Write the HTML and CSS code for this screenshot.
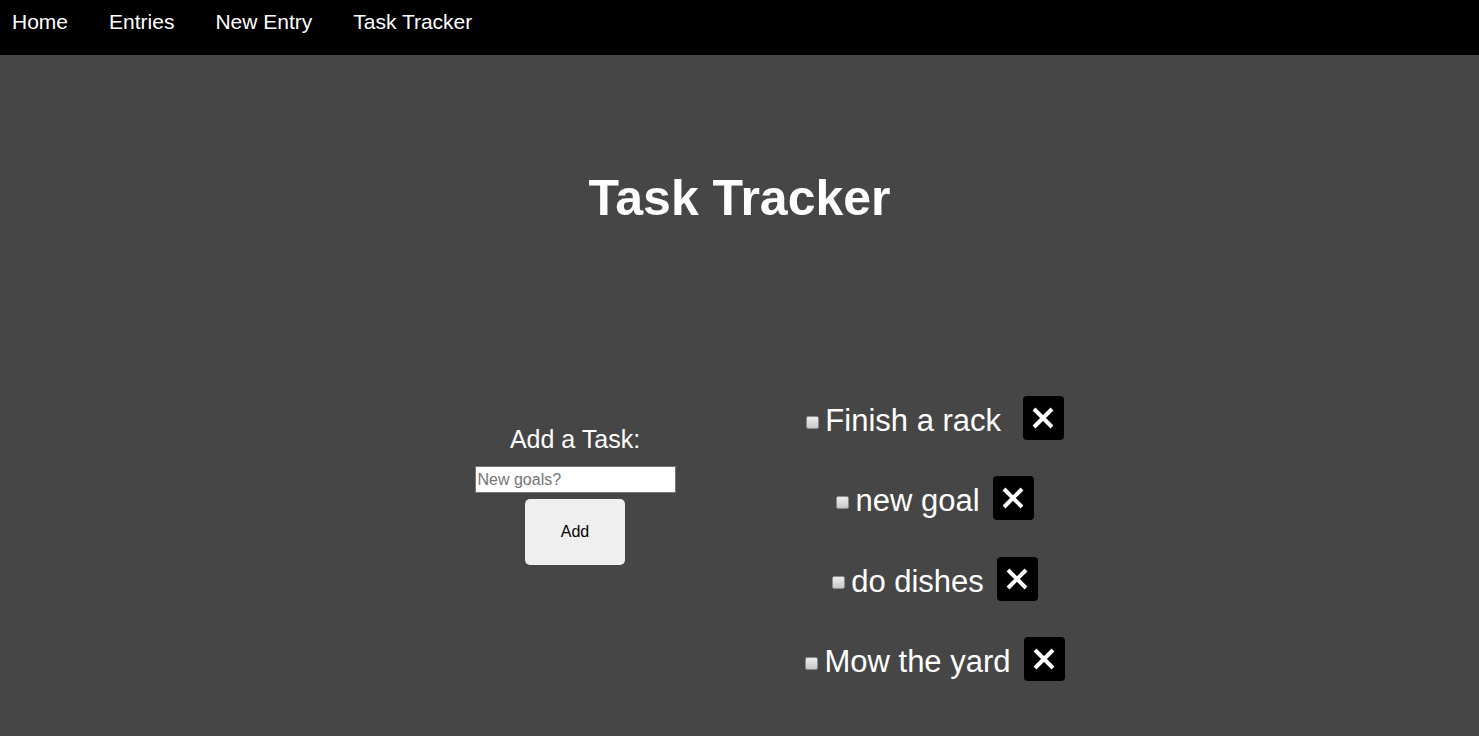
FILE: index.html
```html
<!DOCTYPE html>
<html lang="en">
<head>
  <meta charset="UTF-8">
  <meta name="viewport" content="width=device-width, initial-scale=1.0">
  <title>Task Tracker</title>
  <link rel="stylesheet" href="styles.css">
</head>
<body>

  <nav class="navbar">
    <a href="#">Home</a>
    <a href="#">Entries</a>
    <a href="#">New Entry</a>
    <a href="#">Task Tracker</a>
  </nav>

  <h1>Task Tracker</h1>

  <div class="tracker">
    <div class="add-col">
      <label for="new-task">Add a Task:</label>
      <input type="text" id="new-task" placeholder="New goals?" />
      <button class="add-btn">Add</button>
    </div>

    <div class="task-col">
      <div class="task">
        <input type="checkbox" class="check" />
        <span class="task-text">Finish a rack&nbsp;</span>
        <button class="delete-btn"><svg width="22" height="22" viewBox="0 0 22 22"><path d="M2 2 L20 20 M20 2 L2 20" stroke="#fff" stroke-width="4" /></svg></button>
      </div>
      <div class="task">
        <input type="checkbox" class="check" />
        <span class="task-text">new goal</span>
        <button class="delete-btn"><svg width="22" height="22" viewBox="0 0 22 22"><path d="M2 2 L20 20 M20 2 L2 20" stroke="#fff" stroke-width="4" /></svg></button>
      </div>
      <div class="task">
        <input type="checkbox" class="check" />
        <span class="task-text">do dishes</span>
        <button class="delete-btn"><svg width="22" height="22" viewBox="0 0 22 22"><path d="M2 2 L20 20 M20 2 L2 20" stroke="#fff" stroke-width="4" /></svg></button>
      </div>
      <div class="task">
        <input type="checkbox" class="check" />
        <span class="task-text">Mow the yard</span>
        <button class="delete-btn"><svg width="22" height="22" viewBox="0 0 22 22"><path d="M2 2 L20 20 M20 2 L2 20" stroke="#fff" stroke-width="4" /></svg></button>
      </div>
    </div>
  </div>

</body>
</html>
```

FILE: styles.css
```css
body {
  font-family: "Liberation Sans", Arial, sans-serif;
  background-color: #464646;
  color: white;
  margin: 0;
}
.navbar {
  background-color: black;
  height: 55px;
  display: flex;
  gap: 41px;
  padding: 10px 12px 0;
  box-sizing: border-box;
}
.navbar a {
  color: white;
  text-decoration: none;
  font-size: 21px;
  line-height: 24px;
}
h1 {
  font-size: 50px;
  text-align: center;
  margin: 116px 0 0;
  line-height: 55px;
}
.tracker {
  display: flex;
  justify-content: center;
  padding-left: 31px;
  margin-top: 170px;
}
.add-col {
  width: 360px;
  display: flex;
  flex-direction: column;
  align-items: center;
  padding-top: 32px;
}
.add-col label {
  font-size: 25px;
  line-height: 28px;
  margin: -3px 0 13px;
}
.add-col input {
  width: 201px;
  height: 27px;
  box-sizing: border-box;
  font-family: "Liberation Sans", Arial, sans-serif;
  font-size: 16px;
  padding: 1px 2px;
  border: 1px solid #767676;
  margin: 0;
}
.add-btn {
  width: 100px;
  height: 66px;
  margin-top: 6px;
  background-color: #efefef;
  border: none;
  border-radius: 5px;
  font-family: "Liberation Sans", Arial, sans-serif;
  font-size: 16px;
  color: black;
  cursor: pointer;
}
.task-col {
  width: 360px;
  display: flex;
  flex-direction: column;
  gap: 36.4px;
}
.task {
  height: 44px;
  display: flex;
  align-items: center;
  justify-content: center;
}
.check {
  appearance: none;
  width: 13px;
  height: 13px;
  margin: 8px 6px 0 0;
  border: 1px solid #8a8a8a;
  border-radius: 2px;
  background: linear-gradient(#ececec, #c8c8c8);
}
.task-text {
  font-size: 31px;
  padding-top: 6px;
  margin-right: 13px;
}
.delete-btn {
  width: 41px;
  height: 44px;
  background-color: black;
  border: none;
  border-radius: 4px;
  padding: 0;
  display: flex;
  align-items: center;
  justify-content: center;
  cursor: pointer;
}
```
